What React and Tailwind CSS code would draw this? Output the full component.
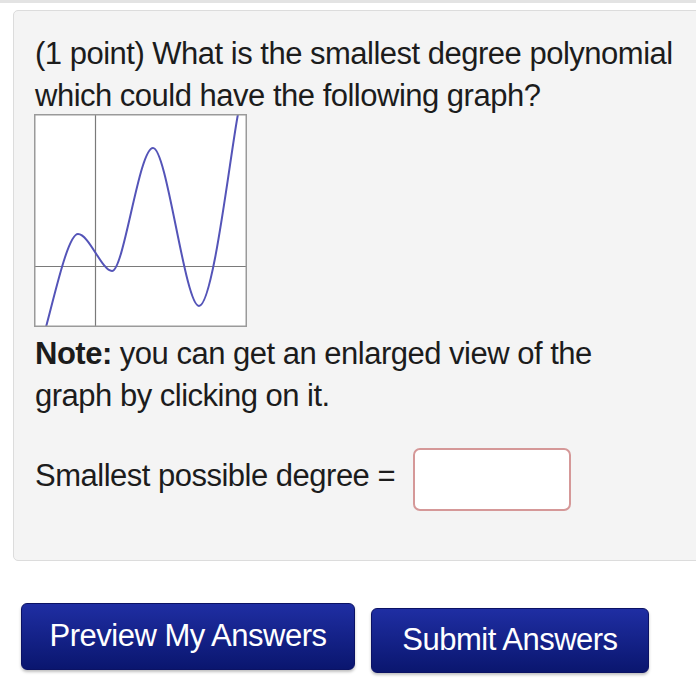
export default function App() {
  const font = { fontFamily: '"Liberation Sans", Arial, Helvetica, sans-serif' };

  return (
    <div
      className="relative w-[696px] h-[700px] overflow-hidden bg-white border-t-[3px] border-[#e3e3e3]"
      style={font}
    >
      {/* problem card */}
      <div className="ml-[13px] mt-[7px] w-[700px] h-[551px] bg-[#f4f4f4] border border-[#dcdcdc] rounded-[5px] pl-[21px] pt-[22px] text-[31px] tracking-[-0.5px] text-[#1c1c1c]">
        <p className="leading-[42px]">
          (1 point) What is the smallest degree polynomial
          <br />
          which could have the following graph?
        </p>

        <Graph />

        <p className="mt-[6px] leading-[42px]">
          <b className="font-bold">Note:</b> you can get an enlarged view of the
          <br />
          graph by clicking on it.
        </p>

        <div className="mt-[31px] flex items-start gap-[18px]">
          <span className="mt-[7px] leading-[42px]">Smallest possible degree =</span>
          <input
            type="text"
            className="w-[158px] h-[63px] bg-white border-2 border-[#d59898] rounded-[7px] outline-none"
          />
        </div>
      </div>

      {/* buttons */}
      <div className="flex items-start ml-[21px] mt-[42px] gap-[16px]">
        <button className="w-[334px] h-[67px] rounded-[6px] border border-[#0b1264] bg-gradient-to-b from-[#1f2ea3] to-[#0a166f] text-white text-[31px] tracking-[-0.5px] shadow-[0_2px_3px_rgba(0,0,0,0.25)]">
          Preview My Answers
        </button>
        <button className="mt-[5px] w-[278px] h-[65px] rounded-[6px] border border-[#0b1264] bg-gradient-to-b from-[#1f2ea3] to-[#0a166f] text-white text-[31px] tracking-[-0.5px] shadow-[0_2px_3px_rgba(0,0,0,0.25)]">
          Submit Answers
        </button>
      </div>
    </div>
  );
}

function Graph() {
  return (
    <svg width="213" height="213" viewBox="0 0 213 213" className="block -ml-[1px] -mt-[3px] bg-white">
      <line x1="61.5" y1="0" x2="61.5" y2="213" stroke="#7a7a7a" strokeWidth="1.2" />
      <line x1="0" y1="152.5" x2="213" y2="152.5" stroke="#7a7a7a" strokeWidth="1.2" />
      <path
        d="M12,213 C21,180 34,120 44,120 C55,120 68,157 78,157 C90,157 105,34 119,34 C133,34 151,192 165,192 C179,192 196,42 204,0"
        fill="none"
        stroke="#5454b8"
        strokeWidth="2"
      />
      <rect x="0.75" y="0.75" width="211.5" height="211.5" fill="none" stroke="#9a9a9a" strokeWidth="1.5" />
    </svg>
  );
}
